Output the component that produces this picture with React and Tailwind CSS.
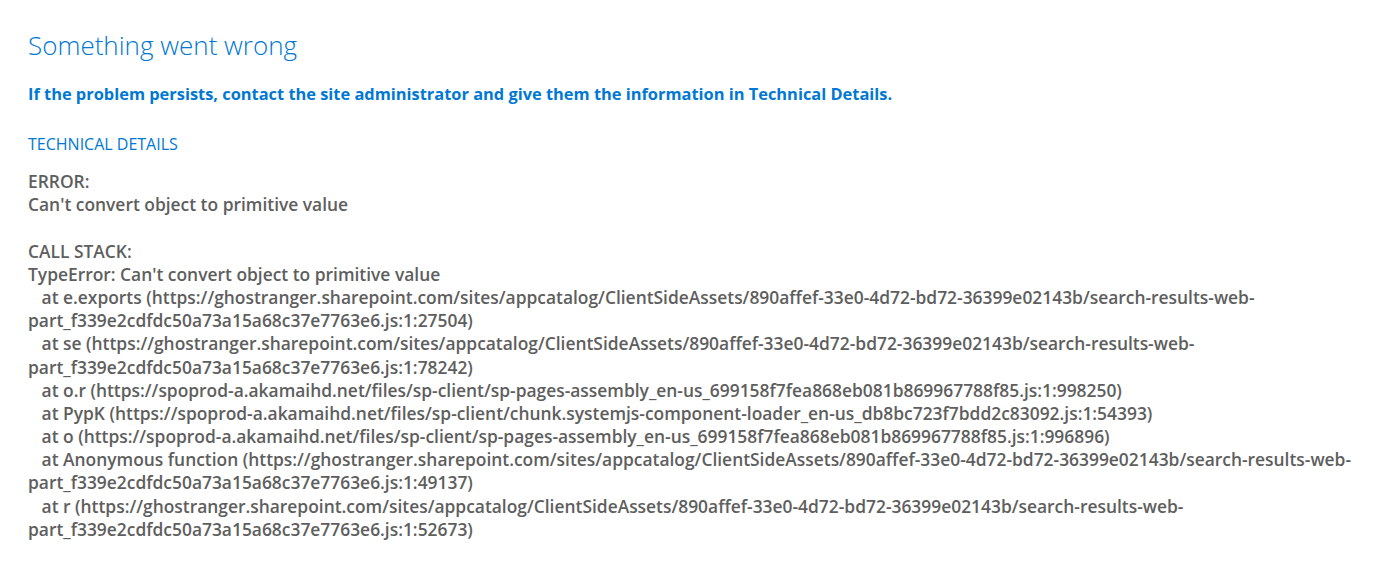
const stack = [
  "ERROR:",
  "Can't convert object to primitive value",
  "",
  "CALL STACK:",
  "TypeError: Can't convert object to primitive value",
  "   at e.exports (https://ghostranger.sharepoint.com/sites/appcatalog/ClientSideAssets/890affef-33e0-4d72-bd72-36399e02143b/search-results-web-",
  "part_f339e2cdfdc50a73a15a68c37e7763e6.js:1:27504)",
  "   at se (https://ghostranger.sharepoint.com/sites/appcatalog/ClientSideAssets/890affef-33e0-4d72-bd72-36399e02143b/search-results-web-",
  "part_f339e2cdfdc50a73a15a68c37e7763e6.js:1:78242)",
  "   at o.r (https://spoprod-a.akamaihd.net/files/sp-client/sp-pages-assembly_en-us_699158f7fea868eb081b869967788f85.js:1:998250)",
  "   at PypK (https://spoprod-a.akamaihd.net/files/sp-client/chunk.systemjs-component-loader_en-us_db8bc723f7bdd2c83092.js:1:54393)",
  "   at o (https://spoprod-a.akamaihd.net/files/sp-client/sp-pages-assembly_en-us_699158f7fea868eb081b869967788f85.js:1:996896)",
  "   at Anonymous function (https://ghostranger.sharepoint.com/sites/appcatalog/ClientSideAssets/890affef-33e0-4d72-bd72-36399e02143b/search-results-web-",
  "part_f339e2cdfdc50a73a15a68c37e7763e6.js:1:49137)",
  "   at r (https://ghostranger.sharepoint.com/sites/appcatalog/ClientSideAssets/890affef-33e0-4d72-bd72-36399e02143b/search-results-web-",
  "part_f339e2cdfdc50a73a15a68c37e7763e6.js:1:52673)",
];

export default function App() {
  return (
    <div className="min-h-[561px] bg-white px-[28px] pt-[28px] font-['Open_Sans',sans-serif]">
      <h1 className="text-[26px] leading-[34px] font-light text-[#0078d4]">
        Something went wrong
      </h1>

      <p className="mt-[21px] text-[16.4px] leading-[22px] font-bold text-[#0078d4]">
        If the problem persists, contact the site administrator and give them the information in Technical Details.
      </p>

      <div className="mt-[29px] text-[16px] leading-[20px] text-[#0078d4]">
        TECHNICAL DETAILS
      </div>

      {/* error + call stack, kept as written lines */}
      <div className="mt-[16px] text-[17.4px] leading-[23.2px] font-semibold text-[#5e5e5e] whitespace-pre">
        {stack.map((line, i) => (
          <div key={i} className="h-[23.2px]">
            {line}
          </div>
        ))}
      </div>
    </div>
  );
}
